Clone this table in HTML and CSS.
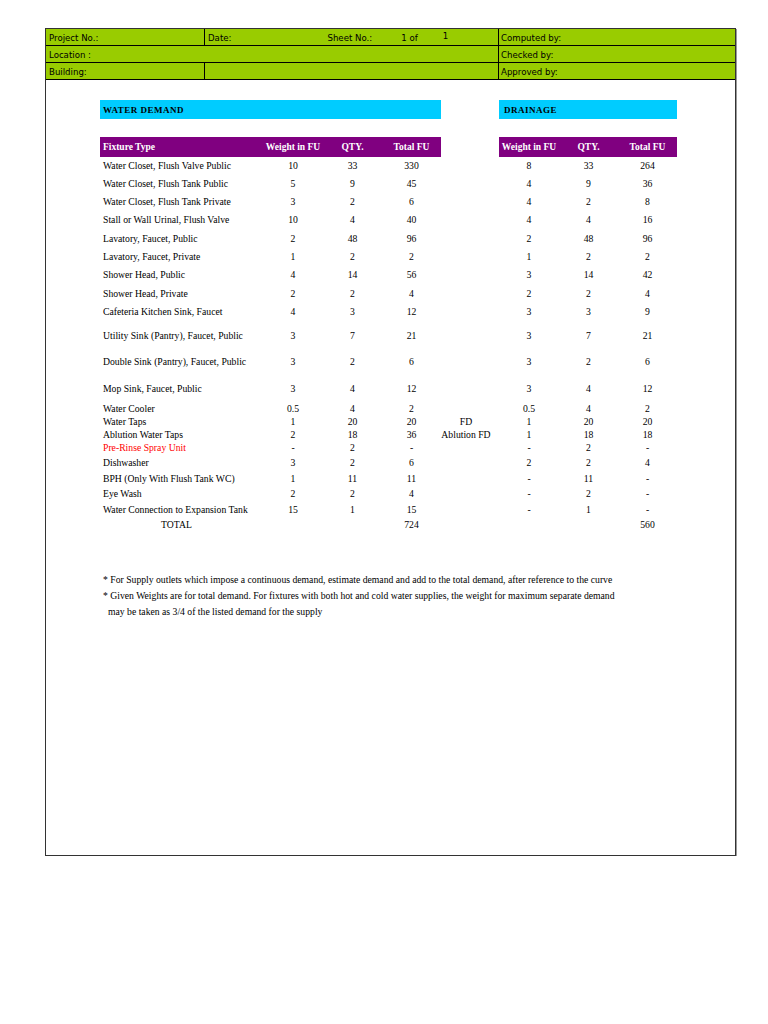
FILE: index.html
```html
<!DOCTYPE html>
<html>
<head>
<meta charset="utf-8">
<link rel="stylesheet" href="styles.css">
</head>
<body>
<div class="sheet">
  <div class="hdr">
    <div class="hrow three">
      <div class="hc">Project No.:</div>
      <div class="hc mid"><span class="date">Date:</span><span class="sno">Sheet No.:</span><span class="of">1 of</span><span class="one">1</span></div>
      <div class="hc last">Computed by:</div>
    </div>
    <div class="hrow two">
      <div class="hc">Location :</div>
      <div class="hc last">Checked by:</div>
    </div>
    <div class="hrow three">
      <div class="hc">Building:</div>
      <div class="hc mid"></div>
      <div class="hc last">Approved by:</div>
    </div>
  </div>

  <div class="content">
    <div class="grid bands">
      <div class="band wd">WATER DEMAND</div>
      <div class="band dr">DRAINAGE</div>
    </div>
    <div class="grid heads">
      <div class="th left">Fixture Type</div>
      <div class="th">Weight in FU</div>
      <div class="th">QTY.</div>
      <div class="th">Total FU</div>
      <div class="gap"></div>
      <div class="th">Weight in FU</div>
      <div class="th">QTY.</div>
      <div class="th">Total FU</div>
    </div>

    <div class="grid row h18"><div class="name">Water Closet, Flush Valve Public</div><div>10</div><div>33</div><div>330</div><div></div><div>8</div><div>33</div><div>264</div></div>
    <div class="grid row h18"><div class="name">Water Closet, Flush Tank Public</div><div>5</div><div>9</div><div>45</div><div></div><div>4</div><div>9</div><div>36</div></div>
    <div class="grid row h18"><div class="name">Water Closet, Flush Tank Private</div><div>3</div><div>2</div><div>6</div><div></div><div>4</div><div>2</div><div>8</div></div>
    <div class="grid row h19"><div class="name">Stall or Wall Urinal, Flush Valve</div><div>10</div><div>4</div><div>40</div><div></div><div>4</div><div>4</div><div>16</div></div>
    <div class="grid row h18"><div class="name">Lavatory, Faucet, Public</div><div>2</div><div>48</div><div>96</div><div></div><div>2</div><div>48</div><div>96</div></div>
    <div class="grid row h18"><div class="name">Lavatory, Faucet, Private</div><div>1</div><div>2</div><div>2</div><div></div><div>1</div><div>2</div><div>2</div></div>
    <div class="grid row h19"><div class="name">Shower Head, Public</div><div>4</div><div>14</div><div>56</div><div></div><div>3</div><div>14</div><div>42</div></div>
    <div class="grid row h18"><div class="name">Shower Head, Private</div><div>2</div><div>2</div><div>4</div><div></div><div>2</div><div>2</div><div>4</div></div>
    <div class="grid row h24"><div class="name">Cafeteria Kitchen Sink, Faucet</div><div>4</div><div>3</div><div>12</div><div></div><div>3</div><div>3</div><div>9</div></div>
    <div class="grid row h26"><div class="name">Utility Sink (Pantry), Faucet, Public</div><div>3</div><div>7</div><div>21</div><div></div><div>3</div><div>7</div><div>21</div></div>
    <div class="grid row h27"><div class="name">Double Sink (Pantry), Faucet, Public</div><div>3</div><div>2</div><div>6</div><div></div><div>3</div><div>2</div><div>6</div></div>
    <div class="grid row h20"><div class="name">Mop Sink, Faucet, Public</div><div>3</div><div>4</div><div>12</div><div></div><div>3</div><div>4</div><div>12</div></div>
    <div class="grid row h13"><div class="name">Water Cooler</div><div>0.5</div><div>4</div><div>2</div><div></div><div>0.5</div><div>4</div><div>2</div></div>
    <div class="grid row h13"><div class="name">Water Taps</div><div>1</div><div>20</div><div>20</div><div class="mcol">FD</div><div>1</div><div>20</div><div>20</div></div>
    <div class="grid row h13"><div class="name">Ablution Water Taps</div><div>2</div><div>18</div><div>36</div><div class="mcol">Ablution FD</div><div>1</div><div>18</div><div>18</div></div>
    <div class="grid row h15"><div class="name red">Pre-Rinse Spray Unit</div><div>-</div><div>2</div><div>-</div><div></div><div>-</div><div>2</div><div>-</div></div>
    <div class="grid row h16"><div class="name">Dishwasher</div><div>3</div><div>2</div><div>6</div><div></div><div>2</div><div>2</div><div>4</div></div>
    <div class="grid row h15"><div class="name">BPH (Only With Flush Tank WC)</div><div>1</div><div>11</div><div>11</div><div></div><div>-</div><div>11</div><div>-</div></div>
    <div class="grid row h16"><div class="name">Eye Wash</div><div>2</div><div>2</div><div>4</div><div></div><div>-</div><div>2</div><div>-</div></div>
    <div class="grid row h15"><div class="name">Water Connection to Expansion Tank</div><div>15</div><div>1</div><div>15</div><div></div><div>-</div><div>1</div><div>-</div></div>
    <div class="grid row h18"><div class="name total">TOTAL</div><div></div><div></div><div>724</div><div></div><div></div><div></div><div>560</div></div>

    <div class="notes">
      <p>* For Supply outlets which impose a continuous demand, estimate demand and add to the total demand, after reference to the curve</p>
      <p>* Given Weights are for total demand. For fixtures with both hot and cold water supplies, the weight for maximum separate demand</p>
      <p class="indent">may be taken as 3/4 of the listed demand for the supply</p>
    </div>
  </div>
</div>
</body>
</html>
```

FILE: styles.css
```css
html, body {
  margin: 0;
  padding: 0;
  background: #fff;
}

.sheet {
  margin: 28px 0 0 45px;
  width: 689px;
  height: 826px;
  border: 1px solid #333;
  box-shadow: 1px 1px 0 #999;
  font-family: "Liberation Serif", "Times New Roman", serif;
  color: #000;
}

.hdr {
  font-family: "DejaVu Sans", Verdana, sans-serif;
  font-size: 8.6px;
}

.hrow {
  display: grid;
  height: 16px;
  background: #99cc00;
  border-bottom: 1px solid #000;
}

.hrow.three {
  grid-template-columns: 159px 294px 1fr;
}

.hrow.two {
  grid-template-columns: 453px 1fr;
}

.hc {
  border-right: 1px solid #000;
  line-height: 14px;
  padding-top: 2px;
  padding-left: 3px;
  white-space: nowrap;
  overflow: hidden;
}

.hc.last {
  border-right: none;
  padding-left: 2px;
}

.hc.mid {
  display: flex;
}

.hc.mid .sno {
  margin-left: 96px;
}

.hc.mid .of {
  margin-left: 29px;
}

.hc.mid .one {
  margin-left: 25px;
  position: relative;
  top: -2px;
}

.content {
  padding: 20px 0 0 54px;
}

.grid {
  display: grid;
  grid-template-columns: 163px 60px 59px 59px 58px 60px 59px 59px;
  width: 577px;
}

.bands {
  height: 19px;
  margin-bottom: 18px;
}

.band {
  background: #00ccff;
  font-weight: bold;
  font-size: 9px;
  line-height: 18px;
  padding-top: 1px;
  letter-spacing: 0.5px;
}

.band.wd {
  grid-column: 1 / 5;
  padding-left: 3px;
}

.band.dr {
  grid-column: 6 / 9;
  padding-left: 5px;
}

.heads {
  height: 20px;
}

.th {
  background: #800080;
  color: #fff;
  font-weight: bold;
  font-size: 9.5px;
  line-height: 20px;
  text-align: center;
  white-space: nowrap;
}

.th.left {
  text-align: left;
  padding-left: 3px;
}

.gap {
  background: transparent;
}

.row {
  font-size: 9.7px;
  line-height: 18px;
}

.row > div {
  text-align: center;
  white-space: nowrap;
}

.row > .name {
  text-align: left;
  padding-left: 3px;
}

.row > .mcol {
  text-align: center;
  padding-right: 8px;
}

.name.red {
  color: #ff0000;
}

.name.total {
  padding-left: 61px;
}

.h13 { height: 13px; }
.h15 { height: 15px; }
.h16 { height: 16px; }
.h18 { height: 18px; }
.h19 { height: 19px; }
.h20 { height: 20px; }
.h24 { height: 24px; }
.h26 { height: 26px; }
.h27 { height: 27px; }

.notes {
  margin-top: 38px;
  font-size: 9.7px;
  line-height: 16px;
}

.notes p {
  margin: 0;
  padding-left: 3px;
  white-space: nowrap;
}

.notes p.indent {
  padding-left: 8px;
}
```
